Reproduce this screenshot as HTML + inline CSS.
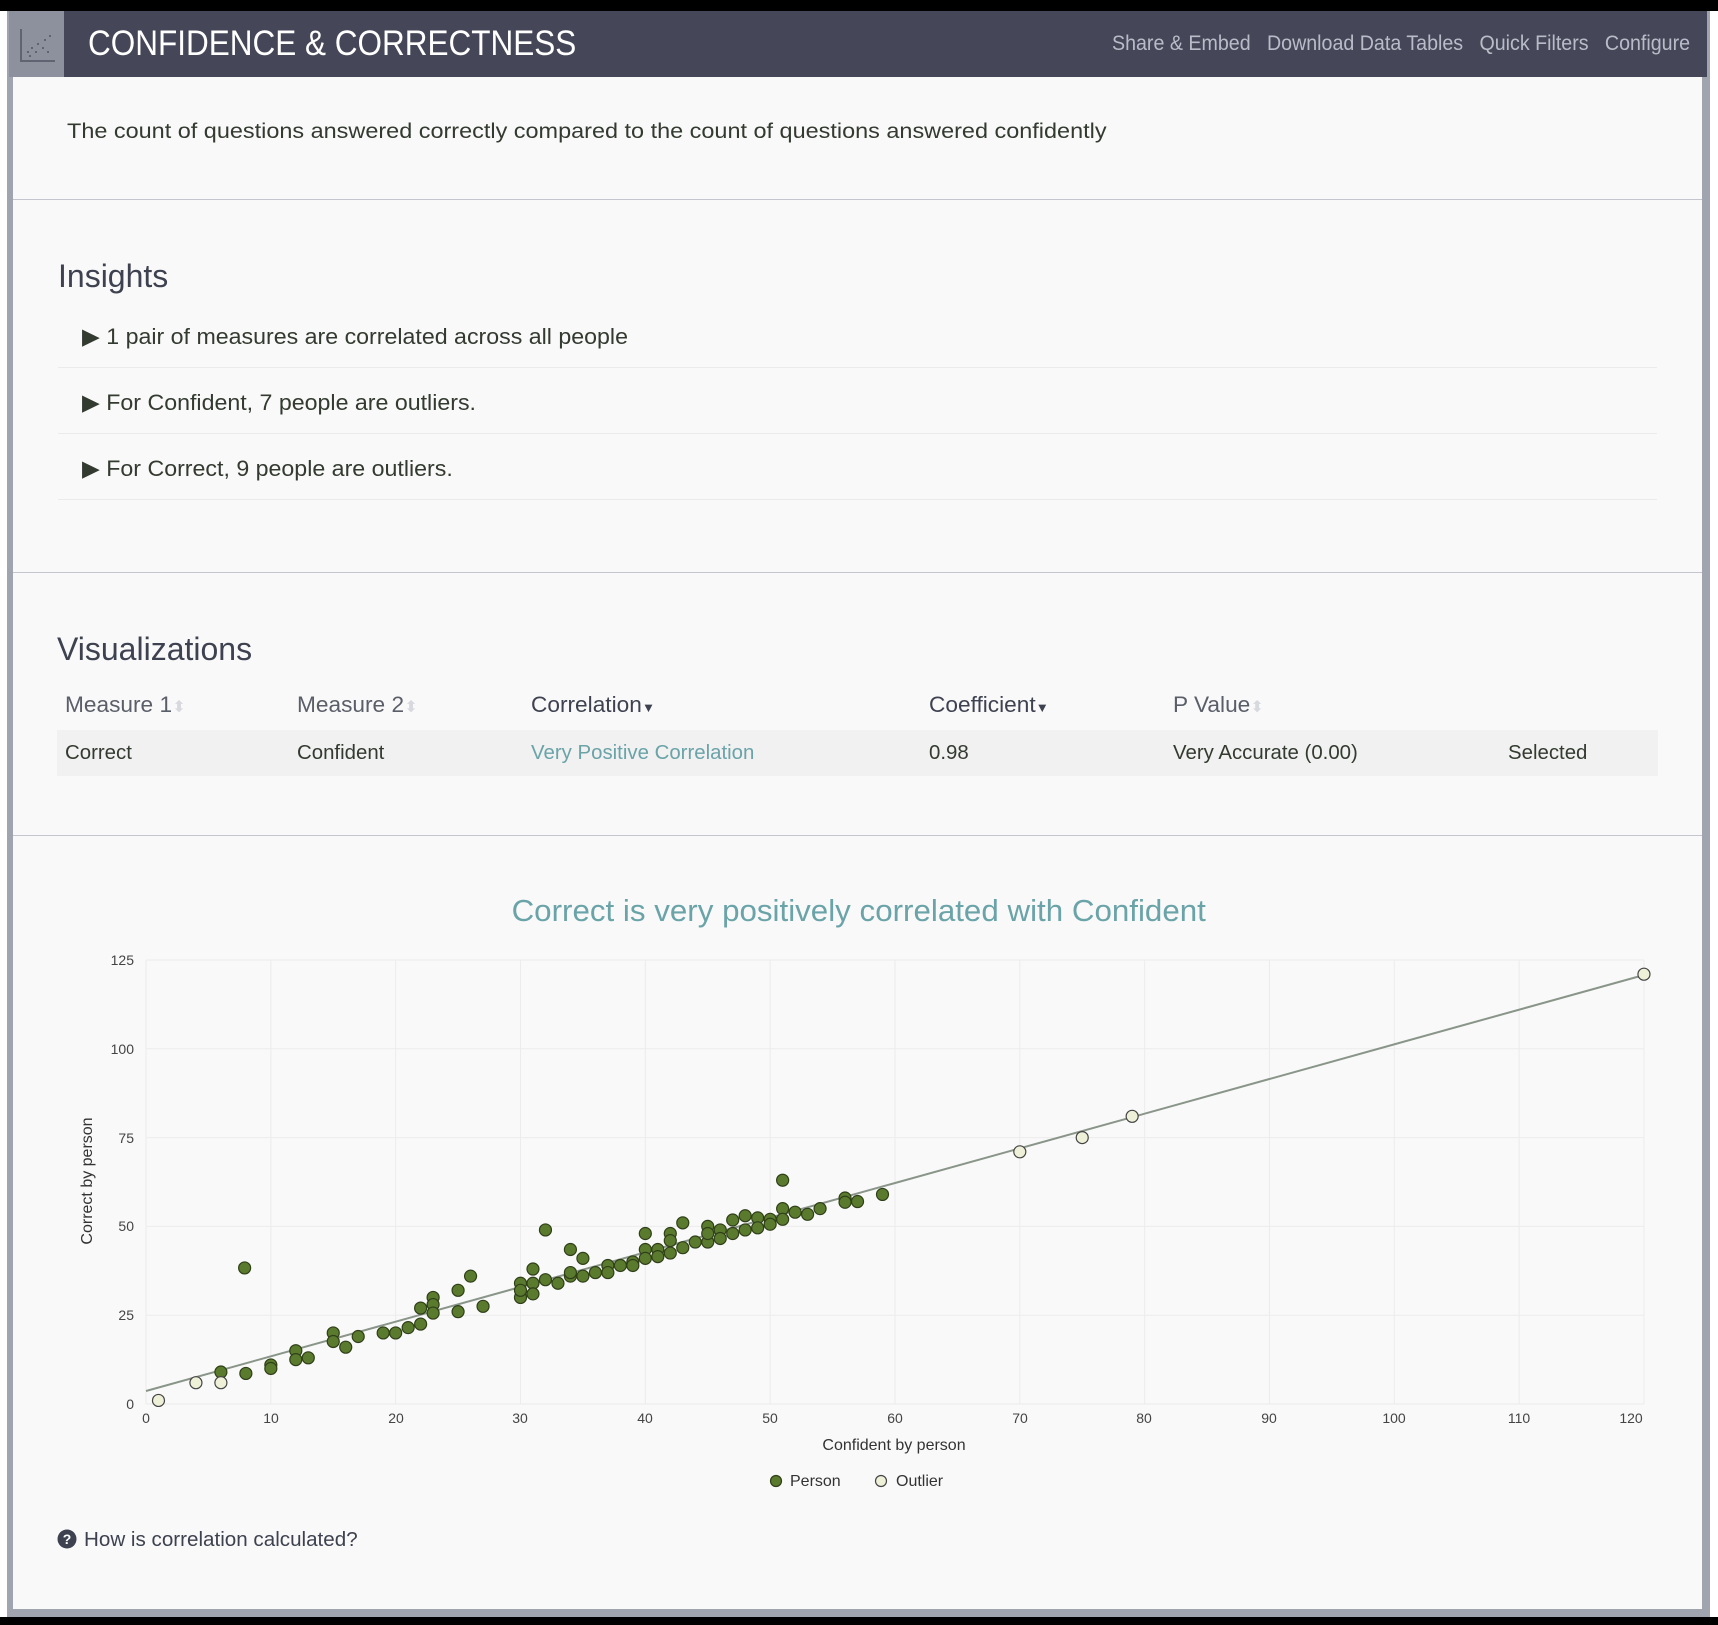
<!DOCTYPE html>
<html><head><meta charset="utf-8">
<style>
*{margin:0;padding:0;box-sizing:border-box}
body{width:1718px;height:1625px;background:#000;position:relative;overflow:hidden;font-family:"Liberation Sans",sans-serif}
#frame{position:absolute;left:0;top:11px;width:1718px;height:1606px;background:#fff}
#panel{position:absolute;left:7px;top:11px;width:1703px;height:1606px;background:#a0a4ae}
#inner{position:absolute;left:13px;top:77px;width:1689px;height:1532px;background:#f9f9f9}
#hdr{position:absolute;left:64px;top:11px;width:1643px;height:66px;background:#454759}
#ico{position:absolute;left:9px;top:11px;width:55px;height:66px;background:#8d919e}
.t{position:absolute;white-space:nowrap;transform-origin:0 50%}
.hr{position:absolute;height:1px;background:#c3c6cc}
.sep{position:absolute;height:1px;background:#ebebeb;left:58px;width:1599px}
.sa{color:#d8d9de;font-size:16px}
.sd{font-size:13px}
</style></head><body>
<div id="frame"></div>
<div id="panel"></div>
<div id="inner"></div>
<div id="ico"><svg width="55" height="66"><path d="M12 18V50H46" stroke="#5f6372" stroke-width="2" fill="none"/><g fill="#5f6372"><rect x="18" y="40" width="2" height="2"/><rect x="22" y="36" width="2" height="2"/><rect x="26" y="40" width="2" height="2"/><rect x="28" y="32" width="2" height="2"/><rect x="33" y="36" width="2" height="2"/><rect x="35" y="28" width="2" height="2"/><rect x="40" y="24" width="2" height="2"/><rect x="38" y="40" width="2" height="2"/><rect x="20" y="44" width="2" height="2"/></g></svg></div>
<div id="hdr"></div>
<div class="t" style="left:88px;top:24px;font-size:35px;line-height:40px;color:#fff;transform:scaleX(0.90)">CONFIDENCE &amp; CORRECTNESS</div>
<div class="t" style="left:1112px;top:32px;font-size:21px;line-height:24px;color:#b9bcc8;transform:scaleX(0.935)">Share &amp; Embed&nbsp;&nbsp; Download Data Tables&nbsp;&nbsp; Quick Filters&nbsp;&nbsp; Configure</div>
<div class="t" style="left:67px;top:119px;font-size:21.5px;line-height:24px;color:#333a30;transform:scaleX(1.09)">The count of questions answered correctly compared to the count of questions answered confidently</div>
<div class="hr" style="left:13px;top:199px;width:1689px"></div>
<div class="t" style="left:58px;top:258px;font-size:32px;line-height:36px;color:#3e4250;transform:scaleX(1.0)">Insights</div>
<div class="t" style="left:82px;top:324px;font-size:22.5px;line-height:26px;color:#333a30;transform:scaleX(1.03)">▶ 1 pair of measures are correlated across all people</div>
<div class="sep" style="top:367px"></div>
<div class="t" style="left:82px;top:390px;font-size:22.5px;line-height:26px;color:#333a30;transform:scaleX(1.03)">▶ For Confident, 7 people are outliers.</div>
<div class="sep" style="top:433px"></div>
<div class="t" style="left:82px;top:456px;font-size:22.5px;line-height:26px;color:#333a30;transform:scaleX(1.03)">▶ For Correct, 9 people are outliers.</div>
<div class="sep" style="top:499px"></div>
<div class="hr" style="left:13px;top:572px;width:1689px"></div>
<div class="t" style="left:57px;top:631px;font-size:32px;line-height:36px;color:#3e4250;transform:scaleX(1.0)">Visualizations</div>
<div style="position:absolute;left:57px;top:730px;width:1601px;height:46px;background:#f0f1f0"></div>
<div class="t" style="left:65px;top:693px;font-size:22px;line-height:24px;color:#5a5e68;transform:scaleX(1.03)">Measure 1<span class="sa">⬍</span></div>
<div class="t" style="left:297px;top:693px;font-size:22px;line-height:24px;color:#5a5e68;transform:scaleX(1.03)">Measure 2<span class="sa">⬍</span></div>
<div class="t" style="left:531px;top:693px;font-size:22px;line-height:24px;color:#3e4250;transform:scaleX(1.03)">Correlation<span class="sd">▼</span></div>
<div class="t" style="left:929px;top:693px;font-size:22px;line-height:24px;color:#3e4250;transform:scaleX(1.03)">Coefficient<span class="sd">▼</span></div>
<div class="t" style="left:1173px;top:693px;font-size:22px;line-height:24px;color:#5a5e68;transform:scaleX(1.03)">P Value<span class="sa">⬍</span></div>
<div class="t" style="left:65px;top:741px;font-size:20px;line-height:24px;color:#333a30;transform:scaleX(1.02)">Correct</div>
<div class="t" style="left:297px;top:741px;font-size:20px;line-height:24px;color:#333a30;transform:scaleX(1.02)">Confident</div>
<div class="t" style="left:531px;top:741px;font-size:20px;line-height:24px;color:#6aa3a8;transform:scaleX(1.02)">Very Positive Correlation</div>
<div class="t" style="left:929px;top:741px;font-size:20px;line-height:24px;color:#333a30;transform:scaleX(1.02)">0.98</div>
<div class="t" style="left:1173px;top:741px;font-size:20px;line-height:24px;color:#333a30;transform:scaleX(1.02)">Very Accurate (0.00)</div>
<div class="t" style="left:1508px;top:741px;font-size:20px;line-height:24px;color:#333a30;transform:scaleX(1.02)">Selected</div>
<div class="hr" style="left:13px;top:835px;width:1689px"></div>
<div style="position:absolute;left:0;top:893px;width:1718px;text-align:center;font-size:31px;line-height:36px;color:#6aa3a8"><span style="display:inline-block;transform:scaleX(1.01)">Correct is very positively correlated with Confident</span></div>
<svg id="plot" width="1718" height="1625" style="position:absolute;left:0;top:0" font-family="Liberation Sans, sans-serif">
<g id="grid" stroke="#ececec" stroke-width="1"></g>
<g font-size="14" fill="#444" text-anchor="middle">
<text x="146" y="1423">0</text><text x="271" y="1423">10</text><text x="396" y="1423">20</text><text x="520" y="1423">30</text><text x="645" y="1423">40</text><text x="770" y="1423">50</text><text x="895" y="1423">60</text><text x="1020" y="1423">70</text><text x="1144" y="1423">80</text><text x="1269" y="1423">90</text><text x="1394" y="1423">100</text><text x="1519" y="1423">110</text><text x="1631" y="1423">120</text>
</g>
<g font-size="14" fill="#444" text-anchor="end">
<text x="134" y="1409">0</text><text x="134" y="1320">25</text><text x="134" y="1231">50</text><text x="134" y="1143">75</text><text x="134" y="1054">100</text><text x="134" y="965">125</text>
</g>
<text x="894" y="1450" font-size="16" fill="#333" text-anchor="middle">Confident by person</text>
<text transform="translate(92,1181) rotate(-90)" font-size="16" fill="#333" text-anchor="middle">Correct by person</text>
<line x1="146" y1="1391" x2="1644" y2="975" stroke="#8a958a" stroke-width="2"/>
<g id="pts"></g>
<circle cx="776" cy="1481" r="5.5" fill="#5a7a2e" stroke="#2f3f18" stroke-width="1.2"/>
<text x="790" y="1486" font-size="16" fill="#333">Person</text>
<circle cx="881" cy="1481" r="5.5" fill="#eef0d8" stroke="#444" stroke-width="1.2"/>
<text x="896" y="1486" font-size="16" fill="#333">Outlier</text>
</svg>
<svg width="20" height="20" style="position:absolute;left:57px;top:1529px"><circle cx="10" cy="10" r="9.5" fill="#3e4250"/><text x="10" y="15" font-size="14" font-weight="bold" fill="#fff" text-anchor="middle" font-family="Liberation Sans">?</text></svg>
<div class="t" style="left:84px;top:1528px;font-size:20px;line-height:24px;color:#3e4250;transform:scaleX(1.03)">How is correlation calculated?</div>
<script>
var X=function(v){return 146+v*12.483},Y=function(v){return 1404-v*3.552};
var ns="http://www.w3.org/2000/svg",g=document.getElementById('grid'),p=document.getElementById('pts');
function el(t,a,par){var e=document.createElementNS(ns,t);for(var k in a)e.setAttribute(k,a[k]);par.appendChild(e);}
for(var i=0;i<=12;i++)el('line',{x1:X(i*10),x2:X(i*10),y1:960,y2:1404},g);
for(var j=0;j<=5;j++)el('line',{x1:146,x2:1644,y1:Y(j*25),y2:Y(j*25)},g);
var P=[[7.9,38.3],[6,9],[8,8.6],[10,11],[10,10],[12,15],[12,12.5],[13,13],[15,20],[15,17.6],[16,16],[17,19],[19,20],[20,20],[21,21.5],[22,22.5],[22,27],[23,30],[23,28],[23,25.6],[25,26],[25,32],[26,36],[27,27.5],[30,30],[30,34],[30,32],[31,38],[31,34],[31,31],[32,49],[32,35],[33,34],[34,43.5],[34,36],[34,37],[35,41],[35,36],[36,37],[37,39],[37,37],[38,39],[39,40],[39,39],[40,48],[40,43.5],[40,41],[41,43.5],[41,41.5],[42,48],[42,46],[42,42.5],[43,51],[43,44],[44,45.6],[45,50],[45,45.6],[45,48],[46,49],[46,46.6],[47,51.8],[47,48],[48,53],[48,49],[49,52.4],[49,49.6],[50,52],[50,50.6],[51,63],[51,55],[51,52],[52,54],[53,53.4],[54,55],[56,58],[56,56.8],[57,57],[59,59]];
var O=[[1,1],[4,6],[6,6],[70,71],[75,75],[79,81],[120,121]];
P.forEach(function(d){el('circle',{cx:X(d[0]),cy:Y(d[1]),r:6,fill:'#5a7a2e',stroke:'#2f3f18','stroke-width':1.2},p)});
O.forEach(function(d){el('circle',{cx:X(d[0]),cy:Y(d[1]),r:6,fill:'#eef0d8',stroke:'#444','stroke-width':1.2},p)});
</script>
</body></html>
